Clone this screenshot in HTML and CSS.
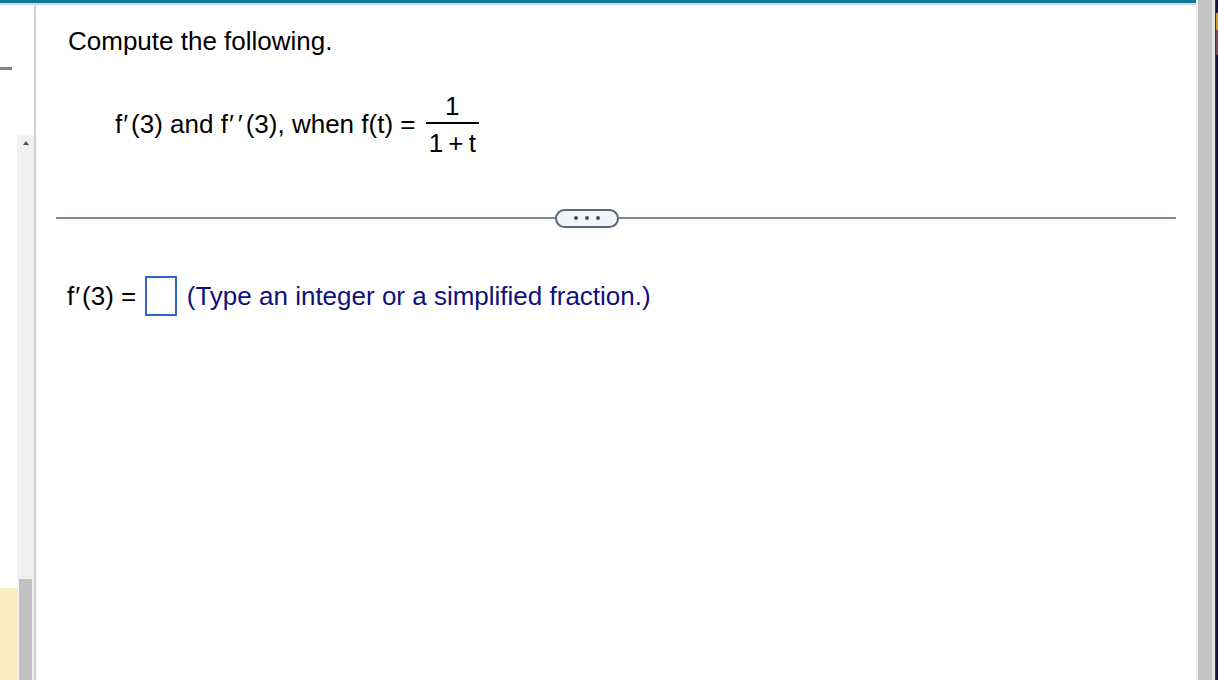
FILE: index.html
```html
<!DOCTYPE html>
<html>
<head>
	<title>Compute the following</title>
	<link rel="stylesheet" href="styles.css">
</head>
<body>
<div class="frame">
	<div class="page">
		<div class="topbar"></div>
		<div class="body">
			<aside class="side">
				<div class="side-fill">
					<div class="dash"></div>
					<div class="grow"></div>
					<div class="note"></div>
				</div>
				<div class="scroll">
					<div class="scroll-up"><span class="arrow"></span></div>
					<div class="grow"></div>
					<div class="thumb"></div>
				</div>
			</aside>
			<main class="content">
				<h1 class="prompt">Compute the following.</h1>
				<p class="question">f<span class="pr">&#8242;</span>(3) and f<span class="pr">&#8242;</span><span class="pr">&#8242;</span>(3), when f(t) = <span class="frac"><span class="num">1</span><span class="bar"></span><span class="den">1 + t</span></span></p>
				<div class="divider">
					<div class="rule rule-left"></div>
					<button class="more"><span class="dot"></span><span class="dot"></span><span class="dot"></span></button>
					<div class="rule"></div>
				</div>
				<p class="answer">f<span class="pr">&#8242;</span>(3) = <span class="box"></span> <span class="hint">(Type an integer or a simplified fraction.)</span></p>
			</main>
		</div>
	</div>
	<div class="rail">
		<div class="rail-light"></div>
		<div class="rail-gray"></div>
		<div class="rail-light2"></div>
		<div class="rail-dark"></div>
		<div class="rail-back"><div class="back-yellow"></div><div class="back-pink"></div></div>
	</div>
</div>
</body>
</html>
```

FILE: styles.css
```css
html, body {
	margin: 0;
	height: 680px;
	overflow: hidden;
	background: #fff;
}
.frame {
	display: flex;
	height: 680px;
	font-family: "Liberation Sans", Arial, sans-serif;
	font-size: 26px;
	line-height: 30px;
	color: #000;
}
.page {
	flex: 1;
	display: flex;
	flex-direction: column;
}
.topbar {
	height: 3px;
	background: #0f7a9c;
	border-bottom: 2px solid #d2d6e6;
}
.body {
	flex: 1;
	display: flex;
}
.grow {
	flex: 1;
}

/* left panel with its scrollbar */
.side {
	width: 34px;
	display: flex;
	border-right: 2px solid #cdd1dd;
}
.side-fill {
	width: 17px;
	display: flex;
	flex-direction: column;
}
.dash {
	margin-top: 62px;
	width: 12px;
	height: 3px;
	background: #858585;
}
.note {
	height: 92px;
	background: #f8ecc0;
}
.scroll {
	width: 17px;
	margin-top: 130px;
	background: #f0f0f0;
	display: flex;
	flex-direction: column;
}
.scroll-up {
	height: 16px;
	display: flex;
	justify-content: center;
	align-items: center;
}
.arrow {
	width: 0;
	height: 0;
	border-left: 3.5px solid transparent;
	border-right: 3.5px solid transparent;
	border-bottom: 4px solid #505050;
}
.thumb {
	height: 101px;
	margin: 0 2px;
	background: #c1c1c1;
}

/* question */
.content {
	flex: 1;
	padding: 21px 20px 0 20px;
}
.prompt {
	margin: 0 0 0 12px;
	font-size: 26px;
	font-weight: normal;
	line-height: 30px;
}
.question {
	margin: 37px 0 0 59px;
}
.question .pr {
	margin: 0 3px 0 1px;
}
.answer .pr {
	margin: 0 2px 0 1px;
}
.frac {
	display: inline-flex;
	flex-direction: column;
	align-items: center;
	vertical-align: 18px;
	margin-left: 3px;
	line-height: 26px;
}
.num {
	padding-bottom: 3px;
}
.bar {
	align-self: stretch;
	height: 2px;
	background: #000;
}
.den {
	padding: 6px 3px 0 3px;
	word-spacing: -2px;
}

.divider {
	margin-top: 53px;
	display: flex;
	align-items: center;
	height: 18px;
}
.rule {
	flex: 1;
	height: 2px;
	background: #7d8899;
}
.rule-left {
	flex: 0 0 499px;
}
.more {
	width: 64px;
	height: 19px;
	padding: 0;
	border: 2px solid #5a6577;
	border-radius: 10px;
	background: #f3f4f7;
	display: flex;
	justify-content: center;
	align-items: center;
	gap: 7px;
}
.dot {
	width: 4px;
	height: 4px;
	border-radius: 50%;
	background: #474f5e;
}

.answer {
	margin: 49px 0 0 11px;
}
.box {
	display: inline-block;
	width: 28px;
	height: 36px;
	border: 2px solid #2f66c8;
	vertical-align: -11px;
	margin-left: 1px;
	margin-right: 3px;
}
.hint {
	color: #10107c;
}

/* right edge */
.rail {
	width: 22px;
	display: flex;
}
.rail-light {
	width: 2px;
	background: #eeeeee;
}
.rail-gray {
	width: 14px;
	background: #c3c3c3;
}
.rail-light2 {
	width: 3px;
	background: #e2e2e2;
}
.rail-dark {
	width: 1px;
	background: #3a3a3a;
}
.rail-back {
	flex: 1;
	background: #14143c;
	display: flex;
	flex-direction: column;
}
.back-yellow {
	margin-top: 13px;
	height: 17px;
	background: #c99a2a;
}
.back-pink {
	height: 25px;
	background: #7a4a5a;
}
```
